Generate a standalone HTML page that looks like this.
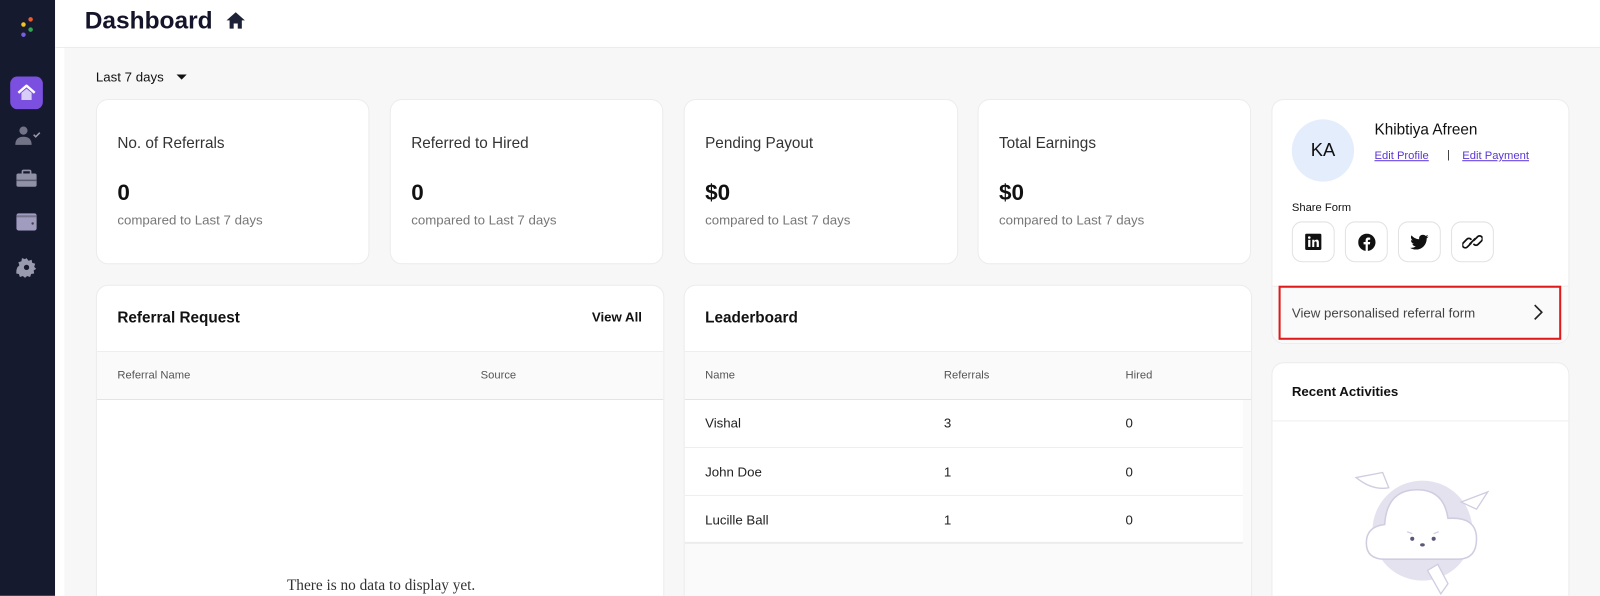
<!DOCTYPE html>
<html><head><meta charset="utf-8"><style>
*{box-sizing:border-box;margin:0;padding:0}
html,body{width:1600px;height:596px;overflow:hidden;background:#f7f7f7}
body{font-family:"Liberation Sans",sans-serif;color:#111}
#w{position:absolute;left:0;top:0;width:1568px;height:584px;transform:scale(1.020408);transform-origin:0 0;overflow:hidden;background:#f7f7f7}
.side{position:absolute;left:0;top:0;width:54px;height:584px;background:#161a2e}
.hdr{position:absolute;left:54px;top:0;width:1514px;height:47px;background:#fff;border-bottom:1px solid #ececec}
.strip{position:absolute;left:54px;top:47px;width:9px;height:549px;background:#fff}
.card{position:absolute;background:#fff;border:1px solid #ececec;border-radius:12px;overflow:hidden}
.stat .t{position:absolute;left:20px;top:34px;font-size:15px;color:#333}
.stat .v{position:absolute;left:20px;top:78px;font-size:22px;font-weight:bold;color:#111}
.stat .s{position:absolute;left:20px;top:110px;font-size:13px;color:#777}
.ab{position:absolute}
.th{font-size:11px;color:#555}
.td{font-size:13px;color:#222}
</style></head><body><div id="w">
<div class="side">
 <svg class="ab" style="left:17px;top:16px" width="20" height="22"><circle cx="13" cy="3" r="2.2" fill="#ef5a2a"/><circle cx="6" cy="8" r="2.2" fill="#f4c31c"/><circle cx="13" cy="13" r="2.2" fill="#2fa84f"/><circle cx="6" cy="18" r="2.2" fill="#7a5ce6"/></svg>
 <div class="ab" style="left:10px;top:75px;width:32px;height:32px;border-radius:7px;background:#7b4fe0"></div>
 <svg class="ab" style="left:15px;top:80px" width="22" height="22" viewBox="0 0 22 22"><path d="M3 11 L11 4 L19 11" stroke="#fff" stroke-width="2.4" fill="none" stroke-linejoin="round"/><path d="M6 11 V18 H16 V11 L11 7Z" fill="#d8ccf8"/></svg>
 <svg class="ab" style="left:14px;top:123px" width="26" height="20"><circle cx="9" cy="5" r="4" fill="#737387"/><path d="M1 19 Q1 11 9 11 Q17 11 17 19Z" fill="#737387"/><path d="M19 9 l2 2 l4 -4" stroke="#9a9aaa" stroke-width="1.5" fill="none"/></svg>
 <svg class="ab" style="left:16px;top:166px" width="20" height="18"><rect x="6" y="1" width="8" height="4" rx="1" fill="none" stroke="#9090a6" stroke-width="1.6"/><rect x="0" y="4" width="20" height="13" rx="2" fill="#9090a6"/><rect x="0" y="10" width="20" height="1.5" fill="#5a5a70"/></svg>
 <svg class="ab" style="left:16px;top:209px" width="20" height="17"><rect x="0" y="0" width="20" height="17" rx="2.5" fill="#a09cc0"/><rect x="0" y="2" width="20" height="2" fill="#77738f"/><circle cx="16" cy="10" r="1.2" fill="#444"/></svg>
 <svg class="ab" style="left:16px;top:252px" width="20" height="20" viewBox="0 0 20 20"><path d="M10 1 l2 2.5 3-1 .5 3 3 1-1 3 2 2-2.5 1.5 .5 3-3 .5-1 3-3-1-2 2-2-2-3 1-1-3-3-.5.5-3L1 10l2-2-1-3 3-1 .5-3 3 1z" fill="#9a9aae"/><circle cx="10" cy="10" r="2.6" fill="#161a2e"/></svg>
</div>
<div class="hdr">
 <div class="ab" style="left:29px;top:7px;font-size:24px;font-weight:bold;color:#14142a">Dashboard</div>
 <svg class="ab" style="left:167px;top:11px" width="20" height="18" viewBox="0 0 20 18"><path d="M10 1 L19 9 H16 V17 H12 V12 H8 V17 H4 V9 H1Z" fill="#1e2238"/></svg>
</div>
<div class="strip"></div>
<div class="ab" style="left:94px;top:68px;font-size:13px;color:#111">Last 7 days</div>
<svg class="ab" style="left:173px;top:73px" width="10" height="6"><path d="M0 0H10L5 5Z" fill="#111"/></svg>

<div class="card stat" style="left:94px;top:97px;width:268px;height:162px"><div class="t">No. of Referrals</div><div class="v">0</div><div class="s">compared to Last 7 days</div></div>
<div class="card stat" style="left:382px;top:97px;width:268px;height:162px"><div class="t">Referred to Hired</div><div class="v">0</div><div class="s">compared to Last 7 days</div></div>
<div class="card stat" style="left:670px;top:97px;width:269px;height:162px"><div class="t">Pending Payout</div><div class="v">$0</div><div class="s">compared to Last 7 days</div></div>
<div class="card stat" style="left:958px;top:97px;width:268px;height:162px"><div class="t">Total Earnings</div><div class="v">$0</div><div class="s">compared to Last 7 days</div></div>

<div class="card" style="left:1246px;top:97px;width:292px;height:240px">
 <div class="ab" style="left:19px;top:19px;width:61px;height:61px;border-radius:50%;background:#e3edfb;font-size:18px;text-align:center;line-height:61px;color:#111">KA</div>
 <div class="ab" style="left:100px;top:21px;font-size:15px;color:#111">Khibtiya Afreen</div>
 <div class="ab" style="left:100px;top:49px;font-size:11px;color:#5b35d5;text-decoration:underline">Edit Profile</div>
 <div class="ab" style="left:171px;top:48px;font-size:11px;color:#333">|</div>
 <div class="ab" style="left:186px;top:49px;font-size:11px;color:#5b35d5;text-decoration:underline">Edit Payment</div>
 <div class="ab" style="left:19px;top:100px;font-size:11px;color:#111">Share Form</div>
 <div class="ab" style="left:19px;top:119px;width:42px;height:40px;border:1px solid #e2e2e2;border-radius:10px"></div>
 <div class="ab" style="left:71px;top:119px;width:42px;height:40px;border:1px solid #e2e2e2;border-radius:10px"></div>
 <div class="ab" style="left:123px;top:119px;width:42px;height:40px;border:1px solid #e2e2e2;border-radius:10px"></div>
 <div class="ab" style="left:175px;top:119px;width:42px;height:40px;border:1px solid #e2e2e2;border-radius:10px"></div>
 <svg class="ab" style="left:32px;top:131px" width="16" height="16" viewBox="0 0 16 16"><rect width="16" height="16" rx="1.5" fill="#111"/><rect x="3" y="6" width="2.2" height="7" fill="#fff"/><circle cx="4.1" cy="3.8" r="1.3" fill="#fff"/><path d="M7 6h2v1.2q.8-1.4 2.5-1.4 2 0 2 2.8V13h-2.2V9q0-1.4-1.1-1.4-1.2 0-1.2 1.5V13H7z" fill="#fff"/></svg>
 <svg class="ab" style="left:84px;top:131px" width="17" height="17" viewBox="0 0 17 17"><circle cx="8.5" cy="8.5" r="8.5" fill="#111"/><path d="M9.5 17V10.5h2l.3-2.3H9.5V6.9q0-1 1-1h1.3V3.9Q11 3.8 10 3.8 7.3 3.8 7.3 6.6v1.6H5.3v2.3h2V17z" fill="#fff"/></svg>
 <svg class="ab" style="left:135px;top:132px" width="18" height="15" viewBox="0 0 24 20"><path d="M24 2.4a9.8 9.8 0 0 1-2.8.8A4.9 4.9 0 0 0 23.3.4a9.900 9.900 0 0 1-3.1 1.2A4.9 4.9 0 0 0 11.8 6 14 14 0 0 1 1.7.9a4.9 4.9 0 0 0 1.5 6.6A4.9 4.9 0 0 1 1 6.9a4.9 4.9 0 0 0 3.9 4.8 4.9 4.9 0 0 1-2.2.1 4.9 4.9 0 0 0 4.6 3.4A9.9 9.9 0 0 1 0 17.2 14 14 0 0 0 7.5 19.4c9 0 14-7.5 14-14v-.6A10 10 0 0 0 24 2.4z" fill="#111"/></svg>
 <svg class="ab" style="left:186px;top:130px" width="20" height="18" viewBox="0 0 20 18"><g fill="none" stroke="#111" stroke-width="1.7" stroke-linecap="round"><path d="M8.5 10.5 L5 14 a2.8 2.8 0 0 1-4-4 l3.5-3.5 a2.8 2.8 0 0 1 4 0"/><path d="M11.5 7.5 L15 4 a2.8 2.8 0 0 1 4 4 l-3.5 3.5 a2.8 2.8 0 0 1-4 0"/><path d="M7.5 11 L12.5 6"/></g></svg>
 <div class="ab" style="left:0;top:182px;width:292px;height:58px;background:#fafafa;border-top:1px solid #eee"></div>
</div>
<div class="ab" style="left:1253px;top:280px;width:277px;height:53px;border:2px solid #e01a1a"></div>
<div class="ab" style="left:1266px;top:299px;font-size:13px;color:#444">View personalised referral form</div>
<svg class="ab" style="left:1503px;top:298px" width="9" height="16"><path d="M1 1 L8 8 L1 15" stroke="#222" stroke-width="1.6" fill="none"/></svg>

<div class="card" style="left:1246px;top:355px;width:292px;height:260px">
 <div class="ab" style="left:19px;top:20px;font-size:13px;font-weight:bold;color:#111">Recent Activities</div>
 <div class="ab" style="left:0;top:56px;width:292px;border-top:1px solid #eee"></div>
 <svg class="ab" style="left:0;top:0" width="292" height="260" viewBox="0 0 292 260">
  <circle cx="147" cy="164" r="49" fill="#e4e2ef"/>
  <path d="M82 112 L108 107 L114 122 Q98 125 82 112Z" fill="#fff" stroke="#cfcde0" stroke-width="1.3"/>
  <path d="M185 136 L211 126 L200 143Z" fill="#fff" stroke="#cfcde0" stroke-width="1.3"/>
  <path d="M110 192 Q92 192 92 176 Q92 160 110 158 Q112 124 142 124 Q168 124 172 152 Q200 150 200 172 Q200 192 182 192 Z" fill="#fff" stroke="#cfcde0" stroke-width="1.5"/>
  <path d="M132 165 l5 2 M163 165 l-5 2" stroke="#cfcde0" stroke-width="1.2"/>
  <circle cx="137" cy="172" r="2" fill="#5a5878"/><circle cx="158" cy="172" r="2" fill="#5a5878"/><ellipse cx="147" cy="178" rx="2.3" ry="1.6" fill="#5a5878"/>
  <path d="M152 203 L162 197 L172 216 L165 226Z" fill="#fff" stroke="#cfcde0" stroke-width="1.3"/>
 </svg>
</div>

<div class="card" style="left:94px;top:279px;width:557px;height:330px">
 <div class="ab" style="left:20px;top:23px;font-size:15px;font-weight:bold;color:#111">Referral Request</div>
 <div class="ab" style="left:485px;top:23px;font-size:13px;font-weight:bold;color:#111">View All</div>
 <div class="ab" style="left:0;top:64px;width:557px;height:48px;background:#fafafa;border-top:1px solid #eee;border-bottom:1px solid #e4e4e4"></div>
 <div class="ab th" style="left:20px;top:82px">Referral Name</div>
 <div class="ab th" style="left:376px;top:82px">Source</div>
 <div class="ab" style="left:0;top:286px;width:557px;text-align:center;font-family:'Liberation Serif',serif;font-size:15px;color:#333">There is no data to display yet.</div>
</div>

<div class="card" style="left:670px;top:279px;width:557px;height:330px;background:#fafafa">
 <div class="ab" style="left:0;top:0;width:557px;height:64px;background:#fff"></div>
 <div class="ab" style="left:20px;top:23px;font-size:15px;font-weight:bold;color:#111">Leaderboard</div>
 <div class="ab" style="left:0;top:64px;width:557px;height:48px;background:#fafafa;border-top:1px solid #eee;border-bottom:1px solid #e4e4e4"></div>
 <div class="ab th" style="left:20px;top:82px">Name</div>
 <div class="ab th" style="left:254px;top:82px">Referrals</div>
 <div class="ab th" style="left:432px;top:82px">Hired</div>
 <div class="ab" style="left:0;top:112px;width:547px;height:141px;background:#fff;border-bottom:2px solid #ececec"></div>
 <div class="ab" style="left:0;top:158px;width:547px;border-top:1px solid #eee"></div>
 <div class="ab" style="left:0;top:205px;width:547px;border-top:1px solid #eee"></div>
 <div class="ab td" style="left:20px;top:127px">Vishal</div><div class="ab td" style="left:254px;top:127px">3</div><div class="ab td" style="left:432px;top:127px">0</div>
 <div class="ab td" style="left:20px;top:175px">John Doe</div><div class="ab td" style="left:254px;top:175px">1</div><div class="ab td" style="left:432px;top:175px">0</div>
 <div class="ab td" style="left:20px;top:222px">Lucille Ball</div><div class="ab td" style="left:254px;top:222px">1</div><div class="ab td" style="left:432px;top:222px">0</div>
</div>
</div></body></html>
